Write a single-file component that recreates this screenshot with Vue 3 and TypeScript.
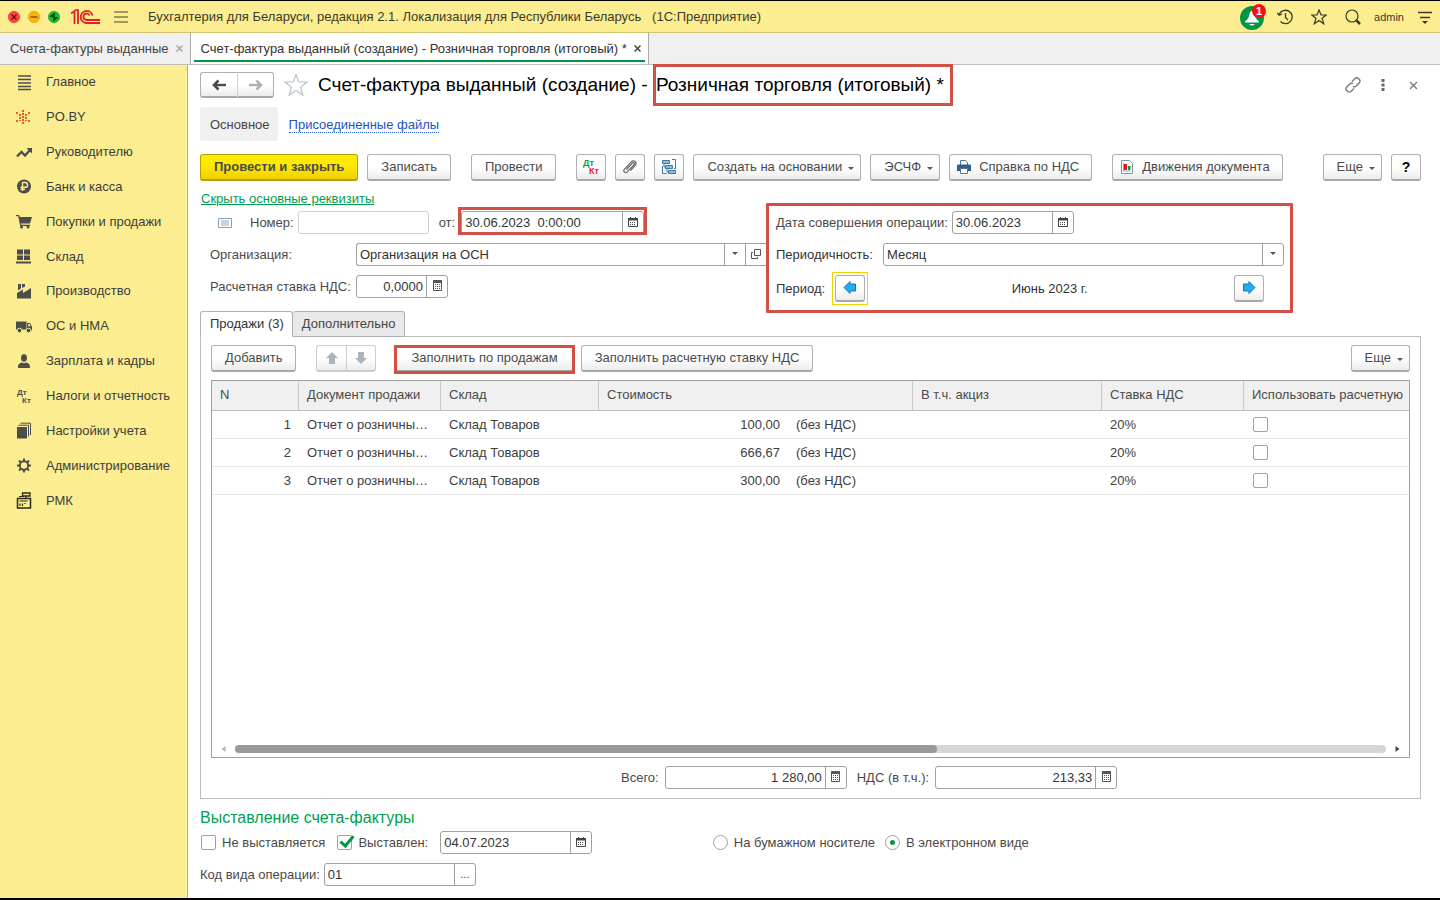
<script setup lang="ts">
import { ref } from 'vue'

interface Section { title: string; icon: string }
interface Sale { n: number; doc: string; store: string; cost: string; vat: string; rate: string; own: boolean }

const icons: Record<string, string> = {
  list: '<path d="M2 2h13M2 5.500h13M2 9h13M2 12.500h13M2 15.500h13" stroke="#4d4d4d" stroke-width="1.700"/>',
  poby: '<g fill="none" stroke="#ee5a1c" stroke-width="2" stroke-dasharray="2 1"><path d="M7 1v15"/><path d="M4 5v7M10 5v7"/><path d="M1 3v3M13 3v3M1 11v3M13 11v3"/></g>',
  trend: '<path d="M1 12.500l4.500-4.500 3.500 3.500 5-5.500" fill="none" stroke="#4d4d4d" stroke-width="2.300"/><path d="M10.500 4H16v5.500z" fill="#4d4d4d"/>',
  bank: '<circle cx="8" cy="8.500" r="7" fill="#4d4d4d"/><path d="M6.500 13V4.500h2.700a2.300 2.300 0 0 1 0 4.800H4.500M4.500 11.200h4.500" fill="none" stroke="#fbed90" stroke-width="1.400"/>',
  cart: '<path d="M0 2h3.200l.6 2H16l-2 6.500H5l.3 1.300H14v1.200H4.200L2.200 3.300H0z" fill="#4d4d4d"/><circle cx="5.500" cy="14" r="1.500" fill="#4d4d4d"/><circle cx="12" cy="14" r="1.500" fill="#4d4d4d"/>',
  store: '<path d="M1 1.500h6v5H1zM8 1.500h6v5H8zM1 7.500h6v4.500H1zM8 7.500h6v4.500H8zM0 13.500h15v2H0z" fill="#4d4d4d"/>',
  factory: '<path d="M1 15.500V10l6-3.500V10l8-5v10.500z" fill="#4d4d4d"/><path d="M2 1h3v4.500L2 7.500zM6 1h3v2.500L6 5z" fill="#4d4d4d"/>',
  truck: '<path d="M0 3.500h10.500v8H0z" fill="#4d4d4d"/><path d="M11 5h3l2 3.500v4h-5z" fill="#4d4d4d"/><path d="M12.200 6h1.500l1 2.200h-2.500z" fill="#fbed90"/><circle cx="3.500" cy="12.500" r="2.300" fill="#4d4d4d" stroke="#fbed90"/><circle cx="12.500" cy="12.500" r="2.300" fill="#4d4d4d" stroke="#fbed90"/>',
  person: '<ellipse cx="8" cy="5" rx="3" ry="3.700" fill="#4d4d4d"/><path d="M2 15c0-4 1-4.500 4-5.500 1.500 1 2.500 1 4 0 3 1 4 1.500 4 5.500z" fill="#4d4d4d"/>',
  dtkt: '<g fill="#4d4d4d" font-family="Liberation Sans, sans-serif" font-weight="bold" font-size="8"><text x="1" y="7">Дт</text><text x="6" y="15">Кт</text></g>',
  books: '<path d="M1 5h10v11.500H1z" fill="#4d4d4d"/><path d="M2.500 3.200H12.500V14.500M4.500 1.200H14.500V13" fill="none" stroke="#4d4d4d"/>',
  gear: '<circle cx="8" cy="8.500" r="4.200" fill="none" stroke="#4d4d4d" stroke-width="2"/><path d="M8 1.500v3M8 12.500v3M1 8.500h3M12 8.500h3M3 3.500l2.200 2.200M10.800 11.300l2.200 2.200M13 3.500l-2.200 2.200M5.200 11.300L3 13.500" stroke="#4d4d4d" stroke-width="2"/>',
  pos: '<path d="M1.500 6.500h13v9.500h-13z" fill="none" stroke="#2b2a1a" stroke-width="1.500"/><path d="M6.500 1h7.500v3H6.500z" fill="none" stroke="#2b2a1a" stroke-width="1.300"/><path d="M3 4.500h5M10 4v2.500M3.500 9h8M4 11.500v2.500M6.500 11.500v2.500M9 11v1" fill="none" stroke="#2b2a1a" stroke-width="1.200"/>',
}

const sections: Section[] = [
  { title: 'Главное', icon: 'list' },
  { title: 'PO.BY', icon: 'poby' },
  { title: 'Руководителю', icon: 'trend' },
  { title: 'Банк и касса', icon: 'bank' },
  { title: 'Покупки и продажи', icon: 'cart' },
  { title: 'Склад', icon: 'store' },
  { title: 'Производство', icon: 'factory' },
  { title: 'ОС и НМА', icon: 'truck' },
  { title: 'Зарплата и кадры', icon: 'person' },
  { title: 'Налоги и отчетность', icon: 'dtkt' },
  { title: 'Настройки учета', icon: 'books' },
  { title: 'Администрирование', icon: 'gear' },
  { title: 'РМК', icon: 'pos' },
]

const sales = ref<Sale[]>([
  { n: 1, doc: 'Отчет о розничны…', store: 'Склад Товаров', cost: '100,00', vat: '(без НДС)', rate: '20%', own: false },
  { n: 2, doc: 'Отчет о розничны…', store: 'Склад Товаров', cost: '666,67', vat: '(без НДС)', rate: '20%', own: false },
  { n: 3, doc: 'Отчет о розничны…', store: 'Склад Товаров', cost: '300,00', vat: '(без НДС)', rate: '20%', own: false },
])

const number = ref('')
const docDate = ref('30.06.2023  0:00:00')
const opDate = ref('30.06.2023')
const vatRate = ref('0,0000')
const total = ref('1 280,00')
const vatTotal = ref('213,33')
const notIssued = ref(false)
const issued = ref(true)
const issueDate = ref('04.07.2023')
const opCode = ref('01')
const medium = ref('electronic')
</script>

<template>
  <div class="app">
    <header class="titlebar">
      <div class="lights">
        <svg width="52" height="14" viewBox="0 0 52 14">
          <circle cx="6" cy="7" r="5.700" fill="#fb4540" stroke="#d8352f" stroke-width=".6" />
          <path d="M3.500 4.500l5 5M8.500 4.500l-5 5" stroke="#7c0d0a" stroke-width="1.200" />
          <circle cx="26" cy="7" r="5.700" fill="#fdb30a" stroke="#dc9a10" stroke-width=".6" />
          <path d="M22.500 7h7" stroke="#8d5500" stroke-width="1.500" />
          <circle cx="46" cy="7" r="5.700" fill="#0dc62c" stroke="#0aa624" stroke-width=".6" />
          <path d="M42 6.500L46.500 3v3.500zM50 7.500L45.500 11V7.500z" fill="#044d0e" stroke="#044d0e" />
        </svg>
      </div>
      <svg class="logo" width="30" height="16" viewBox="0 0 30 16" fill="none" stroke="#e31e24" stroke-width="1.800">
        <path d="M0 4.500L3.500 2V15M7 15V1.200H4.500" />
        <path d="M21.500 6.500A6 6 0 1 0 15.500 14H29" />
        <path d="M18.600 6.500A3.200 3.200 0 1 0 15.500 11H29" />
      </svg>
      <button class="plain" aria-label="Меню">
        <svg width="14" height="12" viewBox="0 0 14 12"><path d="M0 1h14M0 6h14M0 11h14" stroke="#4a4730" stroke-width="1.200" /></svg>
      </button>
      <span class="product">Бухгалтерия для Беларуси, редакция 2.1. Локализация для Республики Беларусь&nbsp;&nbsp; (1С:Предприятие)</span>
      <div class="tools">
        <button class="plain bell" aria-label="Уведомления">
          <svg width="28" height="28" viewBox="0 0 28 28">
            <circle cx="13" cy="15" r="12" fill="#009646" />
            <path d="M13 8c1.500 0 2 1 2.300 2.500C16 14 17 16 20 18.500v1H6v-1c3-2.500 4-4.500 4.700-8C11 9 11.500 8 13 8zM10.500 21h5c-.3 2-4.700 2-5 0z" fill="#fff" />
            <circle cx="20" cy="8" r="7" fill="#f60c12" />
            <text x="20" y="12" text-anchor="middle" fill="#fff" font-family="Liberation Sans, sans-serif" font-size="11" font-weight="bold">1</text>
          </svg>
        </button>
        <button class="plain" aria-label="История">
          <svg width="16" height="16" viewBox="0 0 16 16" fill="none" stroke="#3d3a26" stroke-width="1.300"><path d="M2.200 5.500A6.700 6.700 0 1 1 3.500 12.500M8.500 4v4.500l2.500 2.500" /><path d="M.3 4l1.900 2.200L5 5" /></svg>
        </button>
        <button class="plain" aria-label="Избранное">
          <svg width="16" height="16" viewBox="0 0 16 16" fill="none" stroke="#3d3a26" stroke-width="1.200"><path d="M8 1l2 5h5.300l-4.200 3.300 1.600 5.500L8 11.500l-4.700 3.300 1.600-5.500L.7 6H6z" /></svg>
        </button>
        <button class="plain" aria-label="Поиск">
          <svg width="16" height="16" viewBox="0 0 16 16" fill="none" stroke="#3d3a26"><circle cx="7" cy="7" r="6" stroke-width="1.200" /><path d="M11.500 11.500l3.500 3.500" stroke-width="2.500" /></svg>
        </button>
        <span class="user">admin</span>
        <button class="plain" aria-label="Настройки">
          <svg width="14" height="14" viewBox="0 0 14 14"><path d="M0 2.500h14M2 7.500h10" stroke="#3d3a26" stroke-width="1.300" /><path d="M4 11h6l-3 3z" fill="#3d3a26" /></svg>
        </button>
      </div>
    </header>

    <nav class="windows">
      <div class="window"><a href="#list">Счета-фактуры выданные</a><button class="plain" aria-label="Закрыть вкладку"><svg width="7" height="7" viewBox="0 0 7 7"><path d="M.5.5l6 6M6.500.5l-6 6" stroke="#a8a8a8" stroke-width="1.500" /></svg></button></div>
      <div class="window active"><a href="#new">Счет-фактура выданный (создание) - Розничная торговля (итоговый) *</a><button class="plain" aria-label="Закрыть вкладку"><svg width="7" height="7" viewBox="0 0 7 7"><path d="M.5.5l6 6M6.500.5l-6 6" stroke="#444" stroke-width="1.500" /></svg></button></div>
    </nav>

    <div class="body">
      <aside class="side">
        <ul>
          <li v-for="s in sections" :key="s.title">
            <a href="#section"><svg width="17" height="17" viewBox="0 0 17 17" v-html="icons[s.icon]"></svg>{{ s.title }}</a>
          </li>
        </ul>
      </aside>

      <main class="doc">
        <div class="head">
          <div class="pair">
            <button class="btn" aria-label="Назад"><svg width="14" height="12" viewBox="0 0 14 12"><path d="M14 6H3" stroke="#4a4a4a" stroke-width="2.400" /><path d="M6.500 1.500L2 6l4.500 4.500" fill="none" stroke="#4a4a4a" stroke-width="2.600" /></svg></button>
            <button class="btn" aria-label="Вперед"><svg width="14" height="12" viewBox="0 0 14 12"><path d="M0 6h11" stroke="#b0b0b0" stroke-width="2.400" /><path d="M7.500 1.500L12 6l-4.500 4.500" fill="none" stroke="#b0b0b0" stroke-width="2.600" /></svg></button>
          </div>
          <svg class="star" width="24" height="24" viewBox="0 0 24 24"><path d="M12 1.500l2.700 7.500H23l-6.500 5.200 2.400 8L12 17.500l-6.900 4.700 2.400-8L1 9h8.300z" fill="#fff" stroke="#bcc3cb" stroke-width="1.200" /></svg>
          <h1>Счет-фактура выданный (создание) - <span class="mark-title">Розничная торговля (итоговый) *</span></h1>
          <div class="head-tools">
            <button class="plain" aria-label="Ссылка"><svg width="16" height="16" viewBox="0 0 16 16" fill="none" stroke="#777" stroke-width="1.400"><path d="M7 4.500l2.500-2.500a3 3 0 0 1 4.500 4.300L11.200 9A3 3 0 0 1 8 9.500M9 11.500L6.500 14A3 3 0 0 1 2 9.700L4.800 7A3 3 0 0 1 8 6.500" /></svg></button>
            <button class="plain" aria-label="Еще действия"><svg width="4" height="12" viewBox="0 0 4 12" fill="#666"><path d="M.5 0h3v3h-3zM.5 4.500h3v3h-3zM.5 9h3v3h-3z" /></svg></button>
            <button class="plain shut" aria-label="Закрыть"><svg width="9" height="9" viewBox="0 0 9 9"><path d="M1 1l7 7M8 1L1 8" stroke="#777" stroke-width="1.300" /></svg></button>
          </div>
        </div>

        <nav class="links">
          <a class="current" href="#main">Основное</a>
          <a class="dotted" href="#files">Присоединенные файлы</a>
        </nav>

        <div class="bar">
          <button class="btn primary">Провести и закрыть</button>
          <button class="btn">Записать</button>
          <button class="btn apart">Провести</button>
          <button class="btn icon apart" aria-label="Дт Кт"><svg width="18" height="18" viewBox="0 0 18 18" font-family="Liberation Sans, sans-serif" font-size="9" font-weight="bold"><text x="1" y="8" fill="#0a9a4a">Дт</text><text x="7" y="16" fill="#e0242c">Кт</text></svg></button>
          <button class="btn icon" aria-label="Файлы"><svg width="16" height="16" viewBox="0 0 16 16" fill="none" stroke="#666" stroke-width="1.200"><path d="M4.500 10.500l5.800-6.300c1.200-1.300 2.900.2 1.700 1.500l-6.700 7.200c-1.900 2-4.700-.5-2.900-2.600l6.900-7.400c2.600-2.700 6.300.6 3.900 3.500L8.500 11.500" /></svg></button>
          <button class="btn icon" aria-label="Структура"><svg width="16" height="16" viewBox="0 0 16 16" fill="#8fbcd8" stroke="#3d7ba6"><path d="M1.500 1.500h7v3h-7zM4.500 6.500h7v3h-7zM7.500 11.500h7v3h-7z" /><path d="M11 .5h3.500v9H13M1.500 7v7.500h4M3 5v3h1.500M6 10v3h1.500" fill="none" /></svg></button>
          <button class="btn menu">Создать на основании<i class="caret"></i></button>
          <button class="btn menu">ЭСЧФ<i class="caret"></i></button>
          <button class="btn pic"><svg width="14" height="14" viewBox="0 0 14 14"><path d="M3.500 5V.5h5l2 2V5" fill="#fff" stroke="#56789a" /><path d="M0 5.500Q0 4.500 1 4.500h12q1 0 1 1V11H0z" fill="#2f6090" /><path d="M3.500 8.500h7v5h-7z" fill="#fff" stroke="#56789a" /></svg>Справка по НДС</button>
          <button class="btn pic apart"><svg width="14" height="14" viewBox="0 0 14 14"><path d="M1.500.5h8l3 3v10h-11z" fill="#fff" stroke="#7d93a5" /><path d="M3.500 3v8h7" fill="none" stroke="#8aa" /><path d="M4 4h3v6H4z" fill="#e8141c" /><path d="M8 6h2.500v4H8z" fill="#0a9a3c" /></svg>Движения документа</button>
          <span class="grow"></span>
          <button class="btn menu">Еще<i class="caret"></i></button>
          <button class="btn icon help">?</button>
        </div>

        <a class="toggle" href="#fold">Скрыть основные реквизиты</a>

        <div class="form">
          <div class="left">
            <div class="row">
              <svg class="state" width="14" height="10" viewBox="0 0 14 10"><path d="M.5.5h13v9H.5z" fill="#fff" stroke="#8a9db0" /><path d="M3 3h8M3 5h8M3 7h8" stroke="#8a9db0" stroke-width=".9" /></svg>
              <label for="num">Номер:</label>
              <span class="field pale num"><input id="num" v-model="number" type="text" /></span>
              <label class="from" for="date">от:</label>
              <span class="field when"><input id="date" v-model="docDate" type="text" /><button aria-label="Выбрать дату"><svg width="10" height="10" viewBox="0 0 10 10"><path d="M.5 1.500h9v8h-9z" fill="#fff" stroke="#444" /><path d="M0 1h10v2.500H0zM2 0h1v2H2zM7 0h1v2H7z" fill="#444" /><path d="M2 5.500h6M2 7.500h6" stroke="#444" stroke-dasharray="1 1" /></svg></button></span>
            </div>
            <div class="row">
              <label class="wide" for="org">Организация:</label>
              <span class="field grow org">
                <select id="org"><option>Организация на ОСН</option></select>
                <span class="drop"><i class="caret small"></i></span>
                <button aria-label="Открыть"><svg width="10" height="10" viewBox="0 0 10 10" fill="none" stroke="#555"><path d="M3.500.5h6v6h-6z" /><path d="M2 3.500H.5v6h6V8" /></svg></button>
              </span>
            </div>
            <div class="row">
              <label class="wide" for="rate">Расчетная ставка НДС:</label>
              <span class="field rate"><input id="rate" v-model="vatRate" class="num-in" type="text" /><button aria-label="Калькулятор"><svg width="9" height="11" viewBox="0 0 9 11"><path d="M.5.5h8v10h-8z" fill="#fff" stroke="#555" /><path d="M0 .5h9v2.500H0z" fill="#555" /><path d="M2.500 4v6M4.500 4v6M6.500 4v6" stroke="#555" stroke-dasharray="1 1" /></svg></button></span>
            </div>
          </div>

          <div class="right">
            <div class="row">
              <label for="op">Дата совершения операции:</label>
              <span class="field op"><input id="op" v-model="opDate" type="text" /><button aria-label="Выбрать дату"><svg width="10" height="10" viewBox="0 0 10 10"><path d="M.5 1.500h9v8h-9z" fill="#fff" stroke="#444" /><path d="M0 1h10v2.500H0zM2 0h1v2H2zM7 0h1v2H7z" fill="#444" /><path d="M2 5.500h6M2 7.500h6" stroke="#444" stroke-dasharray="1 1" /></svg></button></span>
            </div>
            <div class="row">
              <label class="per" for="per">Периодичность:</label>
              <span class="field grow"><select id="per"><option>Месяц</option></select><span class="drop"><i class="caret small"></i></span></span>
            </div>
            <div class="row period">
              <span class="dark">Период:</span>
              <button class="btn icon focus" aria-label="Предыдущий период"><svg width="14" height="14" viewBox="0 0 14 14"><path d="M1 6.500L7 .5V3h5.500v7H7v2.500z" fill="#1cb0f2" stroke="#1676ae" /></svg></button>
              <span class="grow dark month">Июнь 2023 г.</span>
              <button class="btn icon" aria-label="Следующий период"><svg width="14" height="14" viewBox="0 0 14 14"><path d="M13 6.500L7 .5V3H1.500v7H7v2.500z" fill="#1cb0f2" stroke="#1676ae" /></svg></button>
            </div>
          </div>
        </div>

        <div class="tabs" role="tablist">
          <button class="on" role="tab" aria-selected="true">Продажи (3)</button>
          <button role="tab" aria-selected="false">Дополнительно</button>
        </div>

        <section class="panel">
          <div class="bar inner">
            <button class="btn">Добавить</button>
            <div class="pair off apart">
              <button class="btn" aria-label="Вверх"><svg width="12" height="12" viewBox="0 0 12 12"><path d="M6 0l6 6H9v6H3V6H0z" fill="#a9b4bd" /></svg></button>
              <button class="btn" aria-label="Вниз"><svg width="12" height="12" viewBox="0 0 12 12"><path d="M6 12L0 6h3V0h6v6h3z" fill="#a9b4bd" /></svg></button>
            </div>
            <button class="btn marked apart">Заполнить по продажам</button>
            <button class="btn">Заполнить расчетную ставку НДС</button>
            <span class="grow"></span>
            <button class="btn menu">Еще<i class="caret"></i></button>
          </div>

          <div class="grid">
            <table>
              <colgroup><col class="c1" /><col class="c2" /><col class="c3" /><col class="c4" /><col class="c5" /><col class="c4" /><col class="c2" /><col /></colgroup>
              <thead>
                <tr><th>N</th><th>Документ продажи</th><th>Склад</th><th colspan="2">Стоимость</th><th>В т.ч. акциз</th><th>Ставка НДС</th><th>Использовать расчетную</th></tr>
              </thead>
              <tbody>
                <tr v-for="s in sales" :key="s.n">
                  <td class="r">{{ s.n }}</td><td>{{ s.doc }}</td><td>{{ s.store }}</td><td class="r">{{ s.cost }}</td><td>{{ s.vat }}</td><td></td><td>{{ s.rate }}</td>
                  <td><input v-model="s.own" type="checkbox" aria-label="Использовать расчетную ставку" /></td>
                </tr>
              </tbody>
            </table>
            <div class="scroll">
              <svg width="5" height="6" viewBox="0 0 5 6"><path d="M4.500 0v6L.5 3z" fill="#b5b5b5" /></svg>
              <div class="track"><div class="thumb"></div></div>
              <svg width="5" height="6" viewBox="0 0 5 6"><path d="M.5 0v6l4-3z" fill="#444" /></svg>
            </div>
          </div>

          <div class="totals">
            <label for="tot">Всего:</label>
            <span class="field sum"><input id="tot" v-model="total" class="num-in" type="text" /><button aria-label="Калькулятор"><svg width="9" height="11" viewBox="0 0 9 11"><path d="M.5.5h8v10h-8z" fill="#fff" stroke="#555" /><path d="M0 .5h9v2.500H0z" fill="#555" /><path d="M2.500 4v6M4.500 4v6M6.500 4v6" stroke="#555" stroke-dasharray="1 1" /></svg></button></span>
            <label class="second" for="vat">НДС (в т.ч.):</label>
            <span class="field sum"><input id="vat" v-model="vatTotal" class="num-in" type="text" /><button aria-label="Калькулятор"><svg width="9" height="11" viewBox="0 0 9 11"><path d="M.5.5h8v10h-8z" fill="#fff" stroke="#555" /><path d="M0 .5h9v2.500H0z" fill="#555" /><path d="M2.500 4v6M4.500 4v6M6.500 4v6" stroke="#555" stroke-dasharray="1 1" /></svg></button></span>
          </div>
        </section>

        <h2>Выставление счета-фактуры</h2>
        <div class="row issue">
          <div class="checks">
            <label class="opt"><input v-model="notIssued" type="checkbox" />Не выставляется</label>
            <label class="opt"><input v-model="issued" type="checkbox" />Выставлен:</label>
            <span class="field date"><input v-model="issueDate" type="text" aria-label="Дата выставления" /><button aria-label="Выбрать дату"><svg width="10" height="10" viewBox="0 0 10 10"><path d="M.5 1.500h9v8h-9z" fill="#fff" stroke="#444" /><path d="M0 1h10v2.500H0zM2 0h1v2H2zM7 0h1v2H7z" fill="#444" /><path d="M2 5.500h6M2 7.500h6" stroke="#444" stroke-dasharray="1 1" /></svg></button></span>
          </div>
          <label class="opt"><input v-model="medium" type="radio" name="medium" value="paper" />На бумажном носителе</label>
          <label class="opt"><input v-model="medium" type="radio" name="medium" value="electronic" />В электронном виде</label>
        </div>
        <div class="row">
          <label for="code">Код вида операции:</label>
          <span class="field date"><input id="code" v-model="opCode" type="text" /><button class="dots" aria-label="Выбрать">...</button></span>
        </div>
      </main>
    </div>
  </div>
</template>

<style>
body { background: #fff; }
</style>

<style scoped>
* { box-sizing: border-box; }
.app { min-height: 100vh; display: flex; flex-direction: column; border-top: 1px solid #000; border-bottom: 2px solid #000; background: #fff; font: 13px/16px "Liberation Sans", Arial, sans-serif; color: #4a4a4a; }
button, input, select { font: inherit; color: inherit; margin: 0; }
button { cursor: pointer; }
a { color: inherit; text-decoration: none; }
svg { display: block; flex: none; }
.plain { border: 0; padding: 0; background: none; }
.grow { flex: 1; min-width: 0; }

.titlebar { display: flex; align-items: center; height: 32px; background: #fbed90; border-bottom: 1px solid #d3c56e; padding: 0 8px; color: #3d3a2a; white-space: nowrap; }
.logo { margin: 0 13px 0 11px; }
.product { margin-left: 20px; }
.tools { display: flex; align-items: center; gap: 18px; margin-left: auto; }
.bell { margin-right: -8px; }
.user { font-size: 11px; margin: 0 -4px 0 -5px; }

.windows { display: flex; height: 32px; background: #f0f0f0; border-bottom: 1px solid #bdbdbd; color: #444; white-space: nowrap; }
.window { display: flex; align-items: center; border-right: 1px solid #ababab; padding: 0 7px 0 10px; gap: 7px; }
.window.active { position: relative; background: #fff; color: #333; }
.window.active::after { content: ""; position: absolute; left: 3px; right: 3px; bottom: 2px; height: 2px; background: #009646; }

.body { flex: 1; display: flex; }
.side { flex: none; width: 188px; background: #fbed90; border-right: 1px solid #b9b07a; color: #3d3d3d; }
.side ul { display: grid; grid-auto-rows: 1fr; min-height: 453px; margin: 0; padding: 0; list-style: none; }
.side a { display: flex; align-items: center; gap: 13px; height: 100%; padding-left: 16px; }

.doc { flex: 1; min-width: 0; display: flex; flex-direction: column; padding: 7px 19px 12px 12px; }
.head { display: flex; align-items: center; height: 26px; }
.star { margin: 0 10px; }
h1 { margin: 0; font-size: 19px; font-weight: normal; line-height: 26px; color: #000; white-space: nowrap; }
.mark-title { display: inline-block; padding-right: 6px; line-height: 36px; border: 3px solid #d05045; margin: -8px 0; }
.head-tools { display: flex; align-items: center; gap: 20px; margin-left: auto; padding-right: 3px; }
.shut { margin-left: 4px; }

.links { display: flex; align-items: center; gap: 11px; margin: 9px 0 13px; }
.current { padding: 10px 8px 8px 10px; background: #f0f0f0; border-radius: 3px; color: #444; }
.dotted { margin-top: 2px; color: #2255bb; line-height: 14px; border-bottom: 1px dotted #2255bb; }

.bar { display: flex; gap: 9px; white-space: nowrap; }
.btn { height: 27px; padding: 0 13px; border: 1px solid #b0b0b0; border-bottom: 2px solid #a8a8a8; border-radius: 3px; background: linear-gradient(#fff 50%, #ececec); display: flex; align-items: center; justify-content: center; }
.apart { margin-left: 11px; }
.primary { background: linear-gradient(#ffea00 40%, #efd000); border-color: #b5a000; font-weight: bold; }
.icon { width: 30px; padding: 0; }
.menu { padding-right: 6px; gap: 6px; }
.caret { width: 0; height: 0; margin-top: 2px; border: 3px solid transparent; border-top-color: #555; border-bottom: 0; }
.caret.small { margin: 0; }
.pic { padding: 0 12px 0 7px; gap: 8px; }
.help { color: #000; font-size: 14px; font-weight: bold; }
.pair { display: flex; }
.pair .btn { width: 37px; height: 26px; padding: 0; }
.pair .btn:first-child { border-radius: 3px 0 0 3px; border-right: 0; }
.pair .btn:last-child { border-radius: 0 3px 3px 0; border-left-color: #d0d0d0; }
.pair.off .btn { width: 30px; height: 27px; border-color: #ccc; }

.toggle { align-self: flex-start; margin: 10px 0 0 1px; color: #00a050; text-decoration: underline; }

.form { display: grid; grid-template-columns: minmax(0, 566fr) minmax(0, 527fr) minmax(0, 128fr); margin: -4px 0 -2px; }
.left { display: flex; flex-direction: column; gap: 9px; padding: 8px 0 0 10px; }
.right { display: flex; flex-direction: column; gap: 9px; padding: 5px 6px 8px 7px; border: 3px solid #d05045; border-radius: 1px; background: #fff; }
.row { display: flex; align-items: center; white-space: nowrap; }
.row > label { margin-right: 4px; }
.row > .wide { width: 146px; margin: 0; }
.row > .per { width: 107px; margin: 0; color: #333; }
.dark { color: #333; }
.state { margin: 0 18px 0 8px; }
.row > .from { margin: 0 6px 0 10px; }
.field { position: relative; display: flex; height: 23px; border: 1px solid #a0a0a0; border-radius: 3px; background: #fff; color: #333; }
.field.pale { border-color: #cfcfcf; }
.field input, .field select { flex: 1; width: 0; min-width: 0; padding: 0 3px; border: 0; background: none; outline: none; appearance: none; white-space: pre; }
.field .num-in { text-align: right; }
.field button, .drop { flex: none; width: 21px; padding: 0 0 2px; border: 0; border-left: 1px solid #a0a0a0; background: none; display: flex; align-items: center; justify-content: center; }
.drop { pointer-events: none; }
.org { border-right: 0; border-radius: 3px 0 0 3px; }
.num { width: 131px; }
.when { width: 183px; }
.when::after { content: ""; position: absolute; inset: -5px -4px -2px; border: 3px solid #d05045; pointer-events: none; }
.rate { width: 92px; }
.op { width: 122px; }
.date { width: 152px; }
.sum { width: 182px; }
.dots { font-size: 11px; }
.period { padding-right: 20px; }
.focus { position: relative; margin-left: 10px; }
.focus::after { content: ""; position: absolute; inset: -4px -4px -5px; border: 1px solid #f5d000; pointer-events: none; }
.month { text-align: center; }

.tabs { display: flex; position: relative; margin-bottom: -1px; }
.tabs button { height: 26px; padding: 0 9px; border: 1px solid #b0b0b0; border-left: 0; border-radius: 3px 3px 0 0; background: #e9e9e9; color: #444; }
.tabs .on { padding: 0 8px 0 9px; background: #fff; border-left: 1px solid #b0b0b0; border-bottom-color: #fff; color: #333; }
.panel { flex: 1; display: flex; flex-direction: column; padding: 8px 10px 9px; border: 1px solid #bdbdbd; }
.inner { gap: 8px; }
.inner .apart { margin-left: 12px; }
.marked { position: relative; padding: 0 14px; }
.marked::after { content: ""; position: absolute; inset: -1px -3px -4px; border: 3px solid #d05045; pointer-events: none; }

.grid { flex: 1; display: flex; flex-direction: column; margin: 8px 0; border: 1px solid #a0a0a0; overflow: hidden; }
table { width: 100%; table-layout: fixed; border-collapse: separate; border-spacing: 0; white-space: nowrap; color: #3d3d3d; }
.c1 { width: 87px; }
.c2 { width: 142px; }
.c3 { width: 158px; }
.c4 { width: 189px; }
.c5 { width: 125px; }
th { height: 30px; padding: 0 0 2px 8px; background: #f0f0f0; border-right: 1px solid #c8c8c8; border-bottom: 1px solid #bdbdbd; font-weight: normal; text-align: left; color: #4a4a4a; overflow: hidden; }
th:last-child { border-right: 0; }
td { height: 28px; padding: 0 8px; border-bottom: 1px solid #e8e8e8; }
.r { text-align: right; }
.scroll { display: flex; align-items: center; gap: 9px; margin-top: auto; padding: 3px 9px 4px; }
.track { flex: 1; height: 8px; border-radius: 4px; background: #d6d6d6; }
.thumb { width: 61%; height: 8px; border-radius: 4px; background: #999; }
.totals { display: flex; align-items: center; margin-left: 410px; gap: 6px; white-space: nowrap; }
.second { margin-left: 4px; }

h2 { margin: 9px 0 3px; font-size: 16px; line-height: 20px; font-weight: normal; color: #00a050; }
.issue { margin-bottom: 9px; }
.checks { display: flex; align-items: center; width: 42%; }
.opt { display: flex; align-items: center; }
.row > .opt { margin-right: 10px; }
.checks .opt { margin-right: 12px; }
input[type="checkbox"], input[type="radio"] { appearance: none; display: block; flex: none; width: 15px; height: 15px; border: 1px solid #a0a0a0; border-radius: 2px; background: #fff; }
.opt input { margin: 0 6px 0 0; }
input[type="radio"] { border-radius: 50%; }
input[type="radio"]:checked { background: radial-gradient(circle, #009646 2px, #fff 3px); }
.checks .opt:first-child input { margin-left: 1px; }
input[type="checkbox"]:checked { position: relative; }
input[type="checkbox"]:checked::after { content: ""; position: absolute; left: 5px; top: -3px; width: 5px; height: 11px; border: solid #009646; border-width: 0 3px 3px 0; transform: rotate(40deg); }
td input[type="checkbox"] { margin-left: 1px; }
</style>
